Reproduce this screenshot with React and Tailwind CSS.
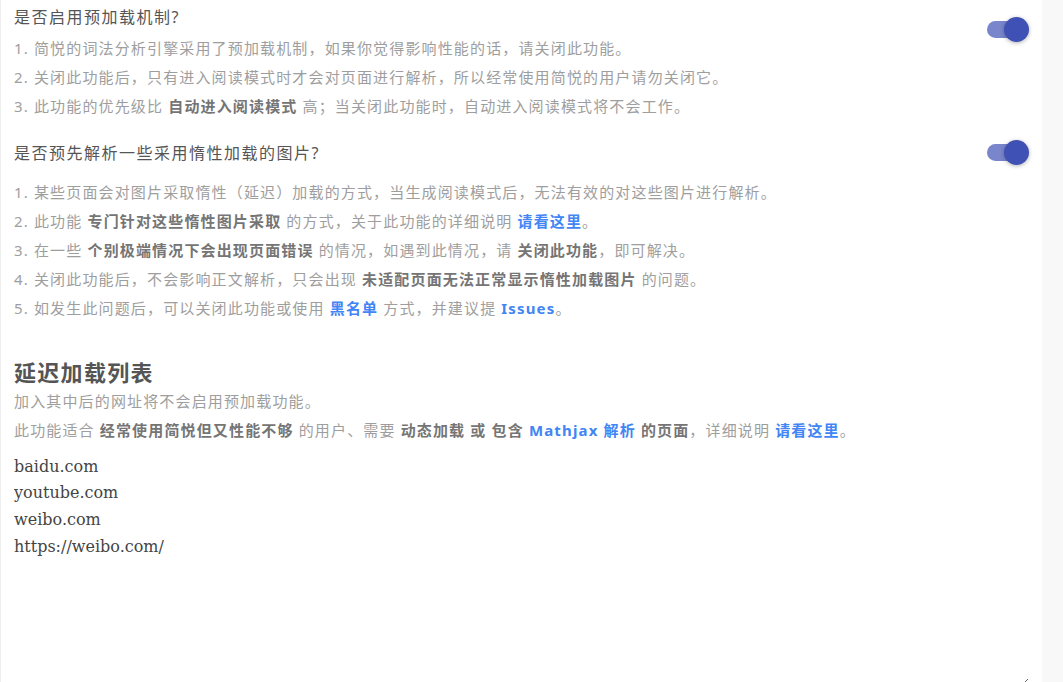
import React from 'react';

const sans = { fontFamily: '"Noto Sans", "Noto Sans CJK SC", sans-serif' };

function B({ children }) {
  return <span className="font-bold text-[#757575]">{children}</span>;
}

function L({ children }) {
  return <span className="font-bold text-[#4285f4]">{children}</span>;
}

function Toggle({ className = '' }) {
  return (
    <div className={`relative w-[42px] h-[25px] shrink-0 ${className}`}>
      <div className="absolute left-0 top-[4px] h-[17px] w-[34px] rounded-full bg-[#7986cb]" />
      <div className="absolute right-0 top-0 h-[25px] w-[25px] rounded-full bg-[#3f51b5] shadow-[0_1px_4px_rgba(0,0,0,0.3)]" />
    </div>
  );
}

function Desc({ lines, className = '' }) {
  return (
    <div className={`text-[15px] leading-[29px] tracking-[1.15px] text-[#9e9e9e] ${className}`}>
      {lines.map((line, i) => (
        <div key={i} className="whitespace-nowrap">
          {i + 1}. {line}
        </div>
      ))}
    </div>
  );
}

export default function App() {
  const preload = [
    <>简悦的词法分析引擎采用了预加载机制，如果你觉得影响性能的话，请关闭此功能。</>,
    <>关闭此功能后，只有进入阅读模式时才会对页面进行解析，所以经常使用简悦的用户请勿关闭它。</>,
    <>此功能的优先级比 <B>自动进入阅读模式</B> 高；当关闭此功能时，自动进入阅读模式将不会工作。</>,
  ];
  const lazy = [
    <>某些页面会对图片采取惰性（延迟）加载的方式，当生成阅读模式后，无法有效的对这些图片进行解析。</>,
    <>此功能 <B>专门针对这些惰性图片采取</B> 的方式，关于此功能的详细说明 <L>请看这里</L>。</>,
    <>在一些 <B>个别极端情况下会出现页面错误</B> 的情况，如遇到此情况，请 <B>关闭此功能</B>，即可解决。</>,
    <>关闭此功能后，不会影响正文解析，只会出现 <B>未适配页面无法正常显示惰性加载图片</B> 的问题。</>,
    <>如发生此问题后，可以关闭此功能或使用 <L>黑名单</L> 方式，并建议提 <L>Issues</L>。</>,
  ];

  return (
    <div className="flex h-[682px] overflow-hidden bg-[#f8f8f8]" style={sans}>
      <div className="w-[1042px] shrink-0 bg-white border-l border-[#eeeeee] pl-[13px] pr-[13px]">
        {/* preload */}
        <div className="flex justify-between items-start">
          <div>
            <div className="pt-[5px] text-[16px] leading-[24px] tracking-[1.5px] text-[#555]">是否启用预加载机制?</div>
            <Desc lines={preload} className="mt-[4.5px]" />
          </div>
          <Toggle className="mt-[17px]" />
        </div>

        {/* lazy images */}
        <div className="mt-[20.5px] flex justify-between items-center">
          <div className="text-[16px] leading-[24px] tracking-[1.5px] text-[#555]">是否预先解析一些采用惰性加载的图片?</div>
          <Toggle className="-mt-[2px]" />
        </div>
        <Desc lines={lazy} className="mt-[12.5px]" />

        {/* lazy list */}
        <div className="mt-[34.5px] text-[22px] leading-[30px] tracking-[1.3px] font-bold text-[#555]">延迟加载列表</div>
        <div className="text-[15px] leading-[29px] tracking-[1.15px] text-[#9e9e9e]">
          <div>加入其中后的网址将不会启用预加载功能。</div>
          <div className="whitespace-nowrap">
            此功能适合 <B>经常使用简悦但又性能不够</B> 的用户、需要 <B>动态加载</B> <B>或</B> <B>包含</B> <L>Mathjax 解析</L> <B>的页面</B>，详细说明 <L>请看这里</L>。
          </div>
        </div>
        <textarea
          className="mt-[1.5px] block w-full h-[240px] pt-[7px] border-0 outline-none text-[16px] leading-[26.7px] text-[#444] bg-white"
          style={{ fontFamily: '"DejaVu Serif", serif' }}
          defaultValue={'baidu.com\nyoutube.com\nweibo.com\nhttps://weibo.com/'}
        />
      </div>
      <div className="flex-1" />
    </div>
  );
}
